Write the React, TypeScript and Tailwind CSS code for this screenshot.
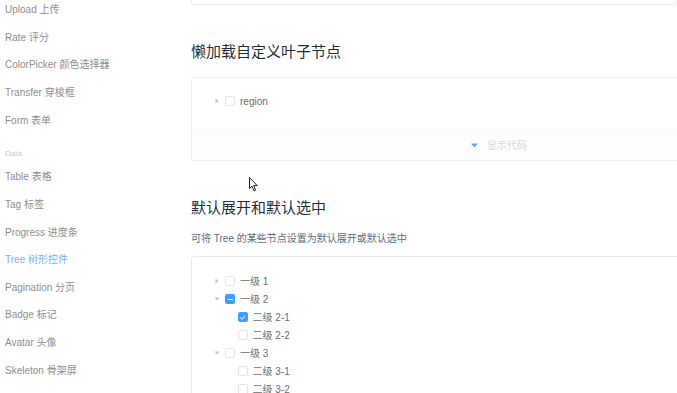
const font = { fontFamily: '"Liberation Sans", "Noto Sans CJK SC", sans-serif' }

type Item = { label: string; active?: boolean }

const groupA: Item[] = [
  { label: 'Upload 上传' },
  { label: 'Rate 评分' },
  { label: 'ColorPicker 颜色选择器' },
  { label: 'Transfer 穿梭框' },
  { label: 'Form 表单' },
]

const groupB: Item[] = [
  { label: 'Table 表格' },
  { label: 'Tag 标签' },
  { label: 'Progress 进度条' },
  { label: 'Tree 树形控件', active: true },
  { label: 'Pagination 分页' },
  { label: 'Badge 标记' },
  { label: 'Avatar 头像' },
  { label: 'Skeleton 骨架屏' },
]

function NavItem({ item }: { item: Item }) {
  return (
    <div
      className={`flex h-[27.6px] items-center whitespace-nowrap pl-[5px] text-[10px] ${
        item.active ? 'text-[#7ab5f5]' : 'text-[#8f8f8f]'
      }`}
    >
      {item.label}
    </div>
  )
}

function Caret({ open, hidden }: { open?: boolean; hidden?: boolean }) {
  return (
    <span className="flex h-[18px] w-[9px] items-center justify-center">
      {!hidden && (
        <svg width="6" height="6" viewBox="0 0 6 6">
          {open ? (
            <path d="M0.5 1.5 L5.5 1.5 L3 4.5 Z" fill="#c0c4cc" />
          ) : (
            <path d="M1.5 0.5 L4.5 3 L1.5 5.5 Z" fill="#c0c4cc" />
          )}
        </svg>
      )}
    </span>
  )
}

function Check({ state }: { state?: 'on' | 'half' }) {
  if (state === 'on') {
    return (
      <span className="flex h-[10px] w-[10px] items-center justify-center rounded-[2px] bg-[#409eff]">
        <svg width="7" height="7" viewBox="0 0 7 7">
          <path d="M1.2 3.6 L2.9 5.2 L5.9 1.8" stroke="#fff" strokeWidth="1" fill="none" />
        </svg>
      </span>
    )
  }
  if (state === 'half') {
    return (
      <span className="flex h-[10px] w-[10px] items-center justify-center rounded-[2px] bg-[#409eff]">
        <span className="h-[1px] w-[5px] bg-white" />
      </span>
    )
  }
  return <span className="h-[10px] w-[10px] rounded-[2px] border border-[#e2e4ea] bg-white" />
}

type Node = { label: string; level: number; caret?: 'open' | 'closed'; state?: 'on' | 'half' }

function Row({ node }: { node: Node }) {
  return (
    <div className="flex h-[18px] items-center" style={{ paddingLeft: (node.level - 1) * 12.6 }}>
      <Caret open={node.caret === 'open'} hidden={!node.caret} />
      <span className="ml-[4px] flex items-center">
        <Check state={node.state} />
      </span>
      <span className="ml-[5px] whitespace-nowrap text-[10px] text-[#6b6e73]">{node.label}</span>
    </div>
  )
}

const nodes: Node[] = [
  { label: '一级 1', level: 1, caret: 'closed' },
  { label: '一级 2', level: 1, caret: 'open', state: 'half' },
  { label: '二级 2-1', level: 2, state: 'on' },
  { label: '二级 2-2', level: 2 },
  { label: '一级 3', level: 1, caret: 'open' },
  { label: '二级 3-1', level: 2 },
  { label: '二级 3-2', level: 2 },
]

export default function App() {
  return (
    <div className="relative flex h-[393px] w-[677px] overflow-hidden bg-white" style={font}>
      <aside className="-mt-[4px] w-[191px] shrink-0">
        {groupA.map((it) => (
          <NavItem key={it.label} item={it} />
        ))}
        <div className="h-[29.2px] pl-[5px] pt-[14px] text-[8px] leading-[12px] text-[#c8c8c8]">Data</div>
        {groupB.map((it) => (
          <NavItem key={it.label} item={it} />
        ))}
      </aside>

      <main className="min-w-0 flex-1">
        <div className="h-[5px] w-[486px] rounded-b-[3px] border-x border-b border-[#ebebeb]" />

        <h3 className="mt-[36px] text-[15px] font-normal leading-[22px] text-[#1f2f3d]">懒加载自定义叶子节点</h3>
        <div className="mt-[14px] w-[620px] rounded-[3px] border border-[#f0f0f2]">
          <div className="pb-[19px] pl-[20px] pt-[14px]">
            <Row node={{ label: 'region', level: 1, caret: 'closed' }} />
          </div>
          <div className="flex h-[31px] items-center border-t border-[#f6f6f8] bg-[#fdfdfe] pl-[279px]">
            <svg width="7" height="5" viewBox="0 0 7 5">
              <path d="M0 0.5 L7 0.5 L3.5 4.5 Z" fill="#5fa6f2" />
            </svg>
            <span className="ml-[9px] text-[10px] text-[#d0d9e6]">显示代码</span>
          </div>
        </div>

        <h3 className="mt-[36px] text-[15px] font-normal leading-[22px] text-[#1f2f3d]">默认展开和默认选中</h3>
        <p className="mt-[12px] text-[10px] leading-[16px] text-[#5e6d82]">可将 Tree 的某些节点设置为默认展开或默认选中</p>
        <div className="mt-[9px] h-[200px] w-[620px] rounded-[3px] border border-[#ebebeb] pl-[20px] pt-[15px]">
          {nodes.map((n) => (
            <Row key={n.label} node={n} />
          ))}
        </div>
      </main>

      <svg className="absolute left-[249px] top-[177px]" width="10" height="15" viewBox="0 0 10 15">
        <path d="M0.5 0.5 L0.5 11.5 L3 9.2 L5 13.8 L6.6 13.1 L4.7 8.6 L8.2 8.6 Z" fill="#fff" stroke="#222" strokeWidth="1" />
      </svg>
    </div>
  )
}
